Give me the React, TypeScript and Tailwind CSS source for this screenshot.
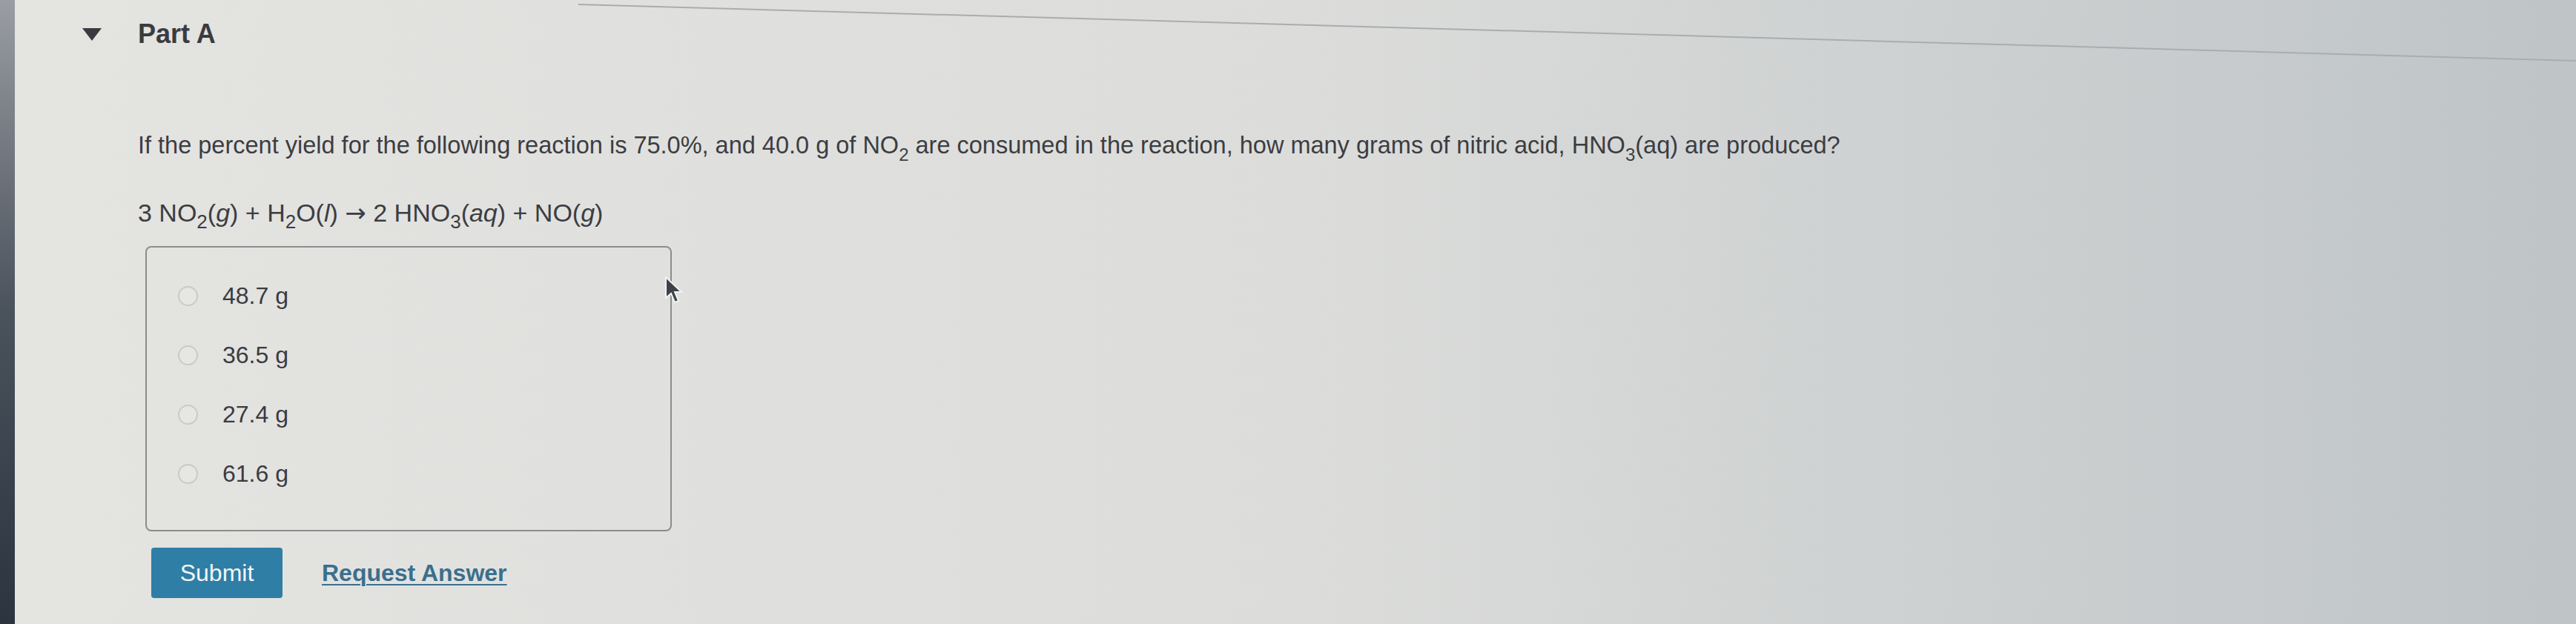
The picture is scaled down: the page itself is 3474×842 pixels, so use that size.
import React from 'react';

const options = ['48.7 g', '36.5 g', '27.4 g', '61.6 g'];

const Sub: React.FC<{ children: React.ReactNode; size?: string }> = ({ children, size }) => (
  <sub className={`${size === 'lg' ? 'text-[26px]' : 'text-[24px]'} relative top-[2px] align-sub leading-none`}>
    {children}
  </sub>
);

export default function App() {
  return (
    <div
      className="w-[3474px] h-[842px] flex overflow-hidden text-[#3c3d42]"
      style={{ fontFamily: '"Liberation Sans", Arial, sans-serif' }}
    >
      {/* dark bezel strip on the left */}
      <div className="w-[20px] h-full bg-gradient-to-b from-[#9a9ea3] via-[#4a525c] to-[#2c3440]"></div>

      <div className="relative flex-1 h-full bg-gradient-to-r from-[#e4e4e1] via-[#dcdddb] to-[#bfc4c7]">
        {/* faint top rule (slightly tilted in the photo) */}
        <svg className="absolute top-0 left-0" width="3454" height="90" viewBox="0 0 3454 90">
          <line x1="760" y1="6" x2="3454" y2="82" stroke="#a9adaf" strokeWidth="2" />
        </svg>

        {/* Part header */}
        <div className="flex items-center pl-[91px] pt-[26px]">
          <svg width="26" height="17" viewBox="0 0 26 17" className="shrink-0">
            <polygon points="0,0 26,0 13,17" fill="#3a3b40" />
          </svg>
          <h3 className="ml-[49px] text-[36px] font-bold leading-[40px] text-[#3a3b40]">Part A</h3>
        </div>

        <div className="pl-[166px]">
          <p className="mt-[110px] text-[32.5px] leading-[40px]">
            If the percent yield for the following reaction is 75.0%, and 40.0 g of NO<Sub>2</Sub> are consumed in the
            reaction, how many grams of nitric acid, HNO<Sub>3</Sub>(aq) are produced?
          </p>

          <p className="mt-[48px] text-[34px] leading-[40px]">
            3 NO<Sub size="lg">2</Sub>(<i>g</i>) + H<Sub size="lg">2</Sub>O(<i>l</i>){' '}
            <span className="text-[34px]" style={{ fontFamily: '"DejaVu Sans", sans-serif' }}>→</span> 2 HNO
            <Sub size="lg">3</Sub>(<i>aq</i>) + NO(<i>g</i>)
          </p>

          {/* answer choices */}
          <div className="ml-[10px] mt-[22px] w-[710px] rounded-[8px] border-2 border-[#8c8d8e] pt-[25px] pb-[36px] pl-[42px]">
            {options.map((opt) => (
              <label key={opt} className="flex items-center h-[80px]">
                <span className="w-[27px] h-[27px] rounded-full border-2 border-[#c9cac9] bg-[#e6e6e3] shrink-0"></span>
                <span className="ml-[33px] text-[32px] leading-[40px] text-[#3a3b42]">{opt}</span>
              </label>
            ))}
          </div>

          <div className="flex items-center mt-[22px] ml-[18px]">
            <button className="w-[177px] h-[68px] rounded-[4px] bg-[#2f7ea5] text-[32px] text-[#f3f6f8]">
              Submit
            </button>
            <a className="ml-[53px] text-[32px] font-bold text-[#3b6f8c] underline underline-offset-[4px] decoration-2">
              Request Answer
            </a>
          </div>
        </div>

        {/* mouse pointer */}
        <svg
          className="absolute left-[876px] top-[372px]"
          width="26"
          height="40"
          viewBox="0 0 26 40"
        >
          <path d="M2 2 L2 30 L9 24 L14 36 L19 34 L14 22 L23 22 Z" fill="#3d4148" stroke="#f2f2f2" strokeWidth="2" />
        </svg>
      </div>
    </div>
  );
}
